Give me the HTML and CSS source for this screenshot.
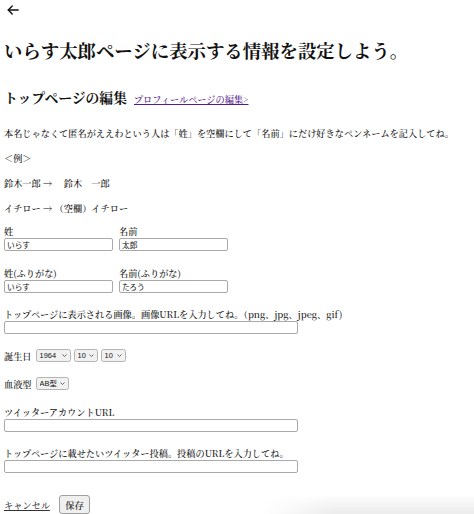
FILE: index.html
```html
<!DOCTYPE html>
<html lang="ja">
<head>
<meta charset="utf-8">
<title>いらす太郎ページの設定</title>
<link rel="stylesheet" href="styles.css">
</head>
<body>
<a class="back" href="#" aria-label="戻る">
  <svg width="12" height="10" viewBox="0 0 12 10" fill="none" stroke="#111" stroke-width="1.4" stroke-linecap="round" stroke-linejoin="round">
    <path d="M11.2 5 H1.3"/>
    <path d="M5.2 1.1 L1.3 5 L5.2 8.9"/>
  </svg>
</a>
<h1 class="title">いらす太郎ページに表示する情報を設定しよう。</h1>
<h2 class="subtitle">トップページの編集<a class="sublink" href="#">プロフィールページの編集&gt;</a></h2>

<p class="note">本名じゃなくて匿名がええわという人は「姓」を空欄にして「名前」にだけ好きなペンネームを記入してね。</p>
<p class="note">＜例＞</p>
<p class="note">鈴木一郎 → 　鈴木　一郎</p>
<p class="note">イチロー → （空欄）イチロー</p>

<form class="form">
  <div class="pair first">
    <div class="field">
      <label class="label">姓</label>
      <input class="input short" type="text" value="いらす">
    </div>
    <div class="field">
      <label class="label">名前</label>
      <input class="input short" type="text" value="太郎">
    </div>
  </div>

  <div class="pair gap16">
    <div class="field">
      <label class="label">姓(ふりがな)</label>
      <input class="input short" type="text" value="いらす">
    </div>
    <div class="field">
      <label class="label">名前(ふりがな)</label>
      <input class="input short" type="text" value="たろう">
    </div>
  </div>

  <div class="field gap15">
    <label class="label">トップページに表示される画像。画像URLを入力してね。（png、jpg、jpeg、gif)</label>
    <input class="input long" type="text">
  </div>

  <div class="inline gap15">
    <span class="inline-label">誕生日</span>
    <span class="select-wrap w35">
      <select class="select"><option>1964</option></select>
      <svg class="chev" width="5" height="3" viewBox="0 0 5 3"><path d="M0.5 0.5 L2.5 2.5 L4.5 0.5" fill="none" stroke="#444" stroke-width="0.8"/></svg>
    </span>
    <span class="select-wrap w24">
      <select class="select"><option>10</option></select>
      <svg class="chev" width="5" height="3" viewBox="0 0 5 3"><path d="M0.5 0.5 L2.5 2.5 L4.5 0.5" fill="none" stroke="#444" stroke-width="0.8"/></svg>
    </span>
    <span class="select-wrap w25">
      <select class="select"><option>10</option></select>
      <svg class="chev" width="5" height="3" viewBox="0 0 5 3"><path d="M0.5 0.5 L2.5 2.5 L4.5 0.5" fill="none" stroke="#444" stroke-width="0.8"/></svg>
    </span>
  </div>

  <div class="inline gap15">
    <span class="inline-label">血液型</span>
    <span class="select-wrap w33">
      <select class="select"><option>AB型</option></select>
      <svg class="chev" width="5" height="3" viewBox="0 0 5 3"><path d="M0.5 0.5 L2.5 2.5 L4.5 0.5" fill="none" stroke="#444" stroke-width="0.8"/></svg>
    </span>
  </div>

  <div class="field gap16">
    <label class="label">ツイッターアカウントURL</label>
    <input class="input long" type="text">
  </div>

  <div class="field gap15">
    <label class="label">トップページに載せたいツイッター投稿。投稿のURLを入力してね。</label>
    <input class="input long" type="text">
  </div>

  <div class="actions">
    <a class="cancel" href="#">キャンセル</a>
    <button class="save" type="button">保存</button>
  </div>
</form>

<div class="shade"></div>
</body>
</html>
```

FILE: styles.css
```css
html, body {
  background: #ffffff;
}

body {
  margin: 0;
  padding: 0 0 0 4px;
  font-family: "Noto Serif CJK JP", "Liberation Serif", "Noto Sans CJK JP", serif;
  font-size: 9.2px;
  font-weight: 500;
  line-height: 12px;
  color: #111;
}

.back {
  display: flex;
  height: 10px;
  padding-top: 5px;
  padding-left: 2.5px;
  width: 14px;
}

.title {
  margin: 23px 0 0;
  font-size: 18.4px;
  line-height: 24px;
  font-weight: 700;
  color: #111;
}

.subtitle {
  margin: 26px 0 0;
  font-size: 13.8px;
  line-height: 18px;
  font-weight: 700;
  color: #111;
}

.sublink {
  margin-left: 7px;
  font-size: 9.2px;
  font-weight: 500;
  color: #551a8b;
  text-decoration: underline;
}

.note {
  margin: 13px 0 0;
}

.note:first-of-type {
  margin-top: 19px;
}

.form {
  margin: 0;
}

.pair {
  display: flex;
  gap: 6px;
}

.first {
  margin-top: 11px;
}

.gap15 {
  margin-top: 15px;
}

.gap16 {
  margin-top: 16px;
}

.field {
  display: flex;
  flex-direction: column;
  align-items: flex-start;
}

.label {
  display: block;
  line-height: 12px;
}

.input {
  box-sizing: border-box;
  margin: 1px 0 0;
  height: 13px;
  padding: 0 2px;
  border: 1px solid #a9a9a9;
  border-radius: 2px;
  background: #fff;
  font-family: "Noto Sans CJK JP", "Liberation Sans", sans-serif;
  font-size: 7.7px;
  font-weight: 400;
  color: #111;
  outline: none;
}

.short {
  width: 109px;
}

.long {
  width: 294px;
}

.inline {
  display: flex;
  align-items: center;
  height: 13px;
}

.inline-label {
  margin-right: 4px;
}

.select-wrap {
  position: relative;
  display: inline-flex;
  height: 13px;
  margin-right: 3px;
}

.w35 { width: 35px; }
.w24 { width: 24px; }
.w25 { width: 25px; }
.w33 { width: 33px; }

.select {
  -webkit-appearance: none;
  appearance: none;
  box-sizing: border-box;
  width: 100%;
  height: 13px;
  margin: 0;
  padding: 0 0 0 3px;
  border: 1px solid #b4b4b4;
  border-radius: 2.5px;
  background: #f1f1f1;
  font-family: "Liberation Sans", "Noto Sans CJK JP", sans-serif;
  font-size: 7.4px;
  font-weight: 400;
  line-height: 11px;
  color: #111;
}

.chev {
  position: absolute;
  right: 4px;
  top: 5px;
  pointer-events: none;
}

.actions {
  display: flex;
  align-items: center;
  margin-top: 22px;
}

.cancel {
  color: #333;
  text-decoration: underline;
}

.save {
  box-sizing: border-box;
  margin-left: 9px;
  width: 31px;
  height: 19px;
  padding: 0;
  border: 1px solid #a0a0a0;
  border-radius: 3px;
  background: #efefef;
  font-family: "Noto Serif CJK JP", "Liberation Serif", "Noto Sans CJK JP", serif;
  font-size: 9.2px;
  font-weight: 500;
  color: #111;
}

.shade {
  position: fixed;
  left: 262px;
  right: 0;
  bottom: 0;
  height: 20px;
  background: linear-gradient(to bottom, rgba(0, 0, 0, 0) 0%, rgba(0, 0, 0, 0.08) 100%);
  -webkit-mask-image: linear-gradient(to right, transparent 0%, #000 35%);
  mask-image: linear-gradient(to right, transparent 0%, #000 35%);
  pointer-events: none;
}
```
